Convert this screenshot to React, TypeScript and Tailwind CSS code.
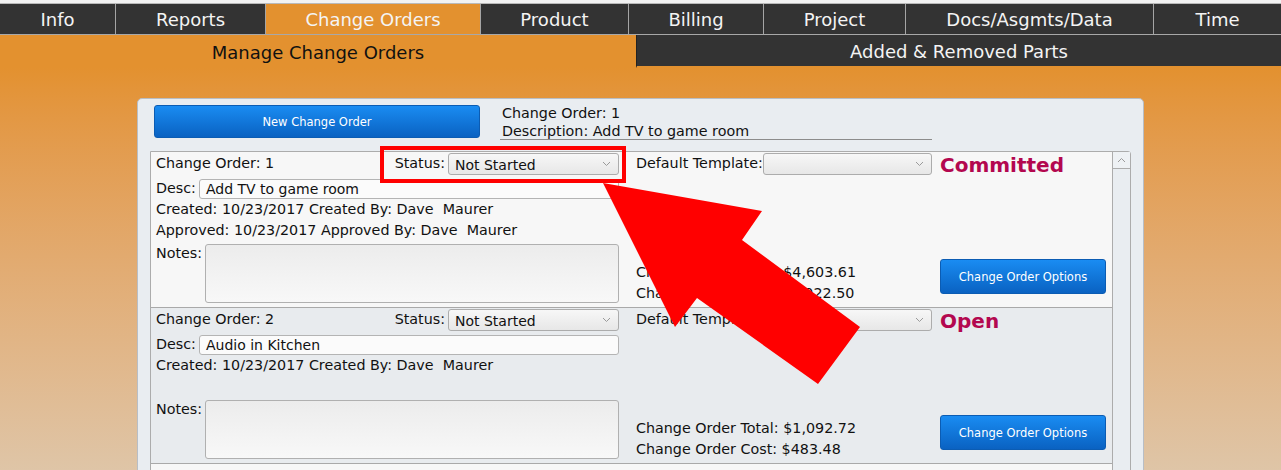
import React from 'react';

const topTabs = [
  { label: 'Info', w: 'w-[115px]' },
  { label: 'Reports', w: 'w-[150px]' },
  { label: 'Change Orders', w: 'w-[215px]', active: true },
  { label: 'Product', w: 'w-[148px]' },
  { label: 'Billing', w: 'w-[135px]' },
  { label: 'Project', w: 'w-[142px]' },
  { label: 'Docs/Asgmts/Data', w: 'w-[248px]' },
  { label: 'Time', w: 'flex-1' },
];

const Chevron: React.FC = () => (
  <svg width="9" height="6" viewBox="0 0 9 6" className="shrink-0">
    <path d="M1 1 L4.5 4.5 L8 1" fill="none" stroke="#9a9a9a" strokeWidth="1" />
  </svg>
);

const Select: React.FC<{ value?: string; w: string }> = ({ value, w }) => (
  <div className={`${w} h-[22px] flex items-center justify-between pl-[6px] pr-[7px] rounded-[3px] border border-[#acacac] bg-gradient-to-b from-[#f7f7f7] to-[#e7e7e7] text-[14px] text-[#111]`}>
    <span className="pt-[2px]">{value}</span>
    <Chevron />
  </div>
);

type Order = {
  num: number;
  status: string;
  desc: string;
  approved: boolean;
  total: string;
  cost: string;
  state: string;
  shaded: boolean;
};

const orders: Order[] = [
  { num: 1, status: 'Not Started', desc: 'Add TV to game room', approved: true, total: '$4,603.61', cost: '$1,922.50', state: 'Committed', shaded: false },
  { num: 2, status: 'Not Started', desc: 'Audio in Kitchen', approved: false, total: '$1,092.72', cost: '$483.48', state: 'Open', shaded: true },
];

const BlueButton: React.FC<{ label: string; w: string; h: string }> = ({ label, w, h }) => (
  <div className={`${w} ${h} flex items-center justify-center pt-[2px] rounded-[3px] border border-[#0b5cb3] bg-gradient-to-b from-[#1a8cf2] to-[#0a62c2] text-white text-[11.5px]`}>
    {label}
  </div>
);

const OrderRow: React.FC<{ o: Order }> = ({ o }) => (
  <div className={`flex h-[156px] border-b border-[#a9a9a9] pl-[5px] ${o.shaded ? 'bg-[#e8ebee]' : 'bg-[#f7f7f7]'}`}>
    {/* left column */}
    <div className="w-[463px] flex flex-col">
      <div className="mt-[1px] h-[22px] flex items-center justify-between">
        <span>Change Order: {o.num}</span>
        <div className="flex items-center gap-[3px]">
          <span>Status:</span>
          <Select value={o.status} w="w-[171px]" />
        </div>
      </div>
      <div className="mt-[4px] h-[20px] flex items-center">
        <span>Desc:</span>
        <div className="ml-[3px] flex-1 h-[20px] flex items-center px-[6px] rounded-[3px] border border-[#b4b4b4] bg-[#fbfbfb] text-[14px]">
          {o.desc}
        </div>
      </div>
      <div className="h-[21px] leading-[21px]">Created: 10/23/2017 Created By: Dave&nbsp; Maurer</div>
      <div className="h-[21px] leading-[21px]">{o.approved ? <>Approved: 10/23/2017 Approved By: Dave&nbsp; Maurer</> : null}</div>
      <div className="mt-[3px] flex justify-between">
        <span className="leading-[18px]">Notes:</span>
        <div className="w-[414px] h-[59px] rounded-[3px] border border-[#b0b0b0] bg-gradient-to-b from-[#ececec] to-[#f8f8f8]" />
      </div>
    </div>

    {/* middle column */}
    <div className="ml-[17px] w-[296px] flex flex-col">
      <div className="mt-[1px] h-[22px] flex items-center justify-between">
        <span>Default Template:</span>
        <Select w="w-[169px]" />
      </div>
      <div className="mt-auto mb-[3px] leading-[21px]">
        <div>Change Order Total: {o.total}</div>
        <div>Change Order Cost: {o.cost}</div>
      </div>
    </div>

    {/* right column */}
    <div className="ml-[8px] w-[166px] flex flex-col">
      <div className="h-[26px] leading-[26px] text-[20px] font-bold text-[#b3074f]">{o.state}</div>
      <div className="mt-[81px]">
        <BlueButton label="Change Order Options" w="w-[166px]" h="h-[35px]" />
      </div>
    </div>
  </div>
);

export default function App() {
  return (
    <div className="relative w-full h-[470px] overflow-hidden bg-[#f2f2f2] font-['DejaVu_Sans',sans-serif] text-[14.3px] text-[#111]">
      {/* top tabs */}
      <div className="mt-[3px] flex h-[32px] bg-[#333333] border-t border-[#b9b9b9] border-b border-b-[#a8a8a8] text-[18px] text-[#f4f4f4]">
        {topTabs.map((t, i) => (
          <div
            key={t.label}
            className={`${t.w} flex items-center justify-center ${i > 0 ? 'border-l border-[#a5a5a5]' : ''} ${t.active ? 'bg-[#e3912f]' : ''}`}
          >
            {t.label}
          </div>
        ))}
      </div>

      {/* sub tabs */}
      <div className="flex h-[33px] text-[18px]">
        <div className="w-[636px] flex items-center justify-center pt-[1px] bg-[#e3912f] text-[#111]">Manage Change Orders</div>
        <div className="flex-1 flex items-center justify-center pt-[1px] bg-[#333333] border-l border-[#222] border-b-2 border-b-[#e3912f] text-[#f4f4f4]">
          Added &amp; Removed Parts
        </div>
      </div>

      {/* body */}
      <div className="h-[435px] bg-gradient-to-b from-[#e3912f] to-[#dec9af] pt-[30px]">
        <div className="ml-[137px] w-[1007px] h-[400px] rounded-t-[5px] border border-[#b8bec6] bg-[#e9edf1]">
          {/* header */}
          <div className="flex items-start">
            <div className="ml-[16px] mt-[6px]">
              <BlueButton label="New Change Order" w="w-[326px]" h="h-[33px]" />
            </div>
            <div className="ml-[20px] mt-[5px] w-[432px] pl-[2px] leading-[18px] border-b border-[#8c8c8c]">
              <div>Change Order: 1</div>
              <div className="-mb-[1px]">Description: Add TV to game room</div>
            </div>
          </div>

          {/* list */}
          <div className="ml-[12px] mt-[11px] w-[981px] h-[330px] flex rounded-tr-[3px] border border-[#acacac]">
            <div className="flex-1 flex flex-col">
              {orders.map(o => (
                <OrderRow key={o.num} o={o} />
              ))}
              <div className="flex-1 bg-[#f7f7f7]" />
            </div>
            <div className="w-[18px] border-l border-[#acacac] bg-[#e9edf1]">
              <div className="h-[17px] flex items-center justify-center border-b border-[#acacac] bg-[#eef1f4]">
                <svg width="9" height="6" viewBox="0 0 9 6">
                  <path d="M1 5 L4.5 1.5 L8 5" fill="none" stroke="#9a9a9a" strokeWidth="1" />
                </svg>
              </div>
            </div>
          </div>
        </div>
      </div>

      {/* annotation: highlight box */}
      <div className="absolute left-[380px] top-[146px] w-[246px] h-[37px] border-4 border-[#ff0000]" />

      {/* annotation: arrow */}
      <svg className="absolute left-0 top-0 pointer-events-none" width="1281" height="470" viewBox="0 0 1281 470">
        <polygon
          points="603,183 762,211 742,240 860,327 818,384 697,298 675,327"
          fill="#ff0000"
        />
      </svg>
    </div>
  );
}
